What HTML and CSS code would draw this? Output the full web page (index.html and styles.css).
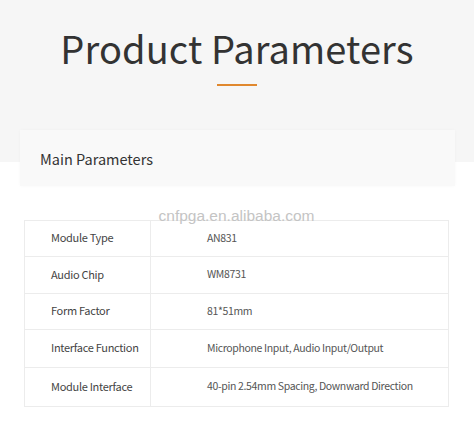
FILE: index.html
```html
<!DOCTYPE html>
<html>
<head>
<meta charset="utf-8">
<link rel="stylesheet" href="styles.css">
</head>
<body>
<div class="page">
  <header class="hero">
    <h1 class="title">Product Parameters</h1>
    <div class="accent"></div>
  </header>
  <div class="card">
    <h2 class="card-title">Main Parameters</h2>
  </div>
  <div class="table-wrap">
    <div class="watermark">cnfpga.en.alibaba.com</div>
    <table class="params">
      <colgroup><col class="col-label"><col></colgroup>
      <tr class="r1"><td class="label">Module Type</td><td class="value">AN831</td></tr>
      <tr class="r2"><td class="label">Audio Chip</td><td class="value">WM8731</td></tr>
      <tr class="r3"><td class="label">Form Factor</td><td class="value">81*51mm</td></tr>
      <tr class="r4"><td class="label">Interface Function</td><td class="value">Microphone Input, Audio Input/Output</td></tr>
      <tr class="r5"><td class="label">Module Interface</td><td class="value">40-pin 2.54mm Spacing, Downward Direction</td></tr>
    </table>
  </div>
</div>
</body>
</html>
```
FILE: styles.css
```css
* { box-sizing: border-box; }
html, body {
  margin: 0;
  padding: 0;
  background: #ffffff;
}
body {
  font-family: "Noto Sans CJK SC", "Noto Sans", sans-serif;
  color: #333;
}
.page {
  width: 474px;
  height: 435px;
  position: relative;
}
.hero {
  background: #f6f6f6;
  height: 162px;
  padding-top: 23px;
  display: flex;
  flex-direction: column;
  align-items: center;
}
.title {
  margin: 0;
  font-size: 38px;
  font-weight: 400;
  line-height: 50px;
  color: #333;
  letter-spacing: 0.1px;
}
.accent {
  margin-top: 11px;
  width: 40px;
  height: 2px;
  background: #e0882e;
}
.card {
  margin: -32px 19px 0 20px;
  height: 56px;
  background: #f9f9f9;
  box-shadow: 0 0 3px rgba(0,0,0,0.03);
  display: flex;
  align-items: center;
  padding-left: 20px;
  position: relative;
}
.card-title {
  margin: 0;
  font-size: 14.5px;
  font-weight: 400;
  color: #333;
}
.table-wrap {
  position: relative;
  margin: 34px 25px 0 24px;
}
.watermark {
  position: absolute;
  top: -13px;
  left: 0;
  right: 0;
  text-align: center;
  font-family: "Liberation Sans", Arial, sans-serif;
  font-size: 15.5px;
  color: #c4c4c4;
  line-height: 18px;
  z-index: 1;
}
.params {
  width: 100%;
  border-collapse: collapse;
  table-layout: fixed;
}
.col-label { width: 126px; }
.params td {
  border: 1px solid #ececec;
  padding: 0 0 3px 0;
  vertical-align: middle;
  white-space: nowrap;
}
.r1 td { height: 36px; }
.r2 td { height: 37px; }
.r3 td { height: 36px; }
.r4 td { height: 38px; }
.r5 td { height: 39px; }
.label {
  padding-left: 26px !important;
  color: #444;
  font-size: 11px;
  letter-spacing: -0.3px;
}
.value {
  padding-left: 56px !important;
  color: #555;
  font-size: 10.5px;
  letter-spacing: -0.35px;
}
```
